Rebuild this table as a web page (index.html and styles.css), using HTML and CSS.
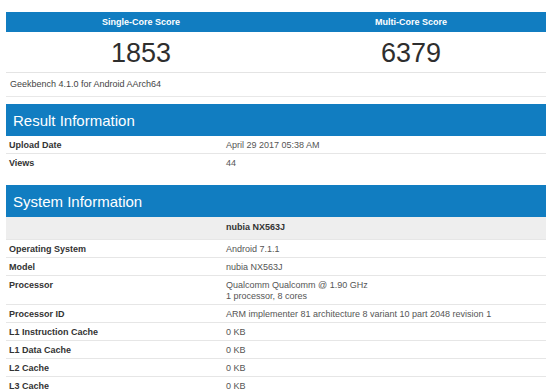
FILE: index.html
```html
<!DOCTYPE html>
<html>
<head>
<meta charset="utf-8">
<link rel="stylesheet" href="styles.css">
</head>
<body>
<div class="scores">
  <div class="score-col">
    <div class="score-head">Single-Core Score</div>
    <div class="score-val">1853</div>
  </div>
  <div class="score-col">
    <div class="score-head">Multi-Core Score</div>
    <div class="score-val">6379</div>
  </div>
</div>
<div class="bench">Geekbench 4.1.0 for Android AArch64</div>

<div class="section">
  <div class="section-head">Result Information</div>
  <div class="row"><div class="lbl">Upload Date</div><div class="val">April 29 2017 05:38 AM</div></div>
  <div class="row"><div class="lbl">Views</div><div class="val">44</div></div>
</div>

<div class="section">
  <div class="section-head">System Information</div>
  <div class="row device"><div class="lbl"></div><div class="val">nubia NX563J</div></div>
  <div class="row"><div class="lbl">Operating System</div><div class="val">Android 7.1.1</div></div>
  <div class="row"><div class="lbl">Model</div><div class="val">nubia NX563J</div></div>
  <div class="row"><div class="lbl">Processor</div><div class="val">Qualcomm Qualcomm @ 1.90 GHz<br>1 processor, 8 cores</div></div>
  <div class="row"><div class="lbl">Processor ID</div><div class="val">ARM implementer 81 architecture 8 variant 10 part 2048 revision 1</div></div>
  <div class="row"><div class="lbl">L1 Instruction Cache</div><div class="val">0 KB</div></div>
  <div class="row"><div class="lbl">L1 Data Cache</div><div class="val">0 KB</div></div>
  <div class="row"><div class="lbl">L2 Cache</div><div class="val">0 KB</div></div>
  <div class="row"><div class="lbl">L3 Cache</div><div class="val">0 KB</div></div>
</div>
</body>
</html>
```
FILE: styles.css
```css
html, body {
  margin: 0;
  background: #ffffff;
}
body {
  padding: 12px 4px 0 6px;
  font-family: "Liberation Sans", Arial, sans-serif;
  color: #333333;
  overflow: hidden;
}
.scores {
  display: grid;
  grid-template-columns: 1fr 1fr;
  border-bottom: 1px solid #e4e4e4;
}
.score-head {
  background: #117dc1;
  color: #ffffff;
  font-weight: bold;
  font-size: 9px;
  height: 20px;
  line-height: 20px;
  text-align: center;
}
.score-val {
  height: 40px;
  line-height: 42px;
  font-size: 27px;
  text-align: center;
  color: #2e2e2e;
}
.bench {
  font-size: 9px;
  line-height: 11px;
  padding: 6px 4px;
  color: #444444;
  border-bottom: 1px solid #e8e8e8;
}
.section {
  margin-top: 7px;
}
.section + .section {
  margin-top: 14px;
}
.section-head {
  background: #117dc1;
  color: #ffffff;
  font-size: 15px;
  height: 32px;
  line-height: 33px;
  padding-left: 7px;
}
.row {
  display: grid;
  grid-template-columns: 217px 1fr;
  border-top: 1px solid #e6e6e6;
  font-size: 9px;
  line-height: 11px;
}
.section-head + .row {
  border-top: none;
}
.lbl {
  font-weight: bold;
  color: #333333;
  padding: 4px 3px 2px 3px;
}
.val {
  color: #555555;
  padding: 4px 3px 2px 3px;
}
.device {
  background: #eeeeee;
}
.device .val {
  font-weight: bold;
  color: #333333;
  padding: 5px 3px 6px 3px;
}
```
